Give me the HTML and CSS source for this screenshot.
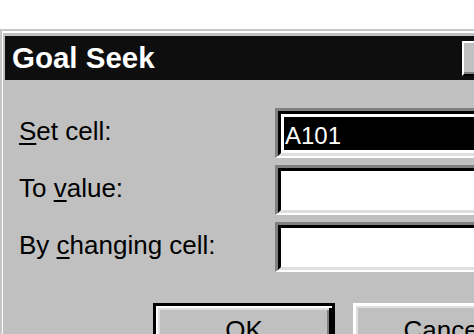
FILE: index.html
```html
<!DOCTYPE html>
<html lang="en">
<head>
<meta charset="utf-8">
<title>Goal Seek</title>
<link rel="stylesheet" href="styles.css">
</head>
<body>
<div class="spacer"></div>
<div class="window">
  <div class="frame">
    <div class="titlebar">
      <span class="title">Goal Seek</span>
      <span class="tbtn">?</span>
      <span class="tbtn">×</span>
    </div>
    <div class="content">
      <div class="form">
        <label class="label"><u>S</u>et cell:</label>
        <div class="field"><div class="field-inner"><div class="selected">A101</div></div></div>
        <label class="label">To <u>v</u>alue:</label>
        <div class="field"><div class="field-inner"><div class="plain"></div></div></div>
        <label class="label">By <u>c</u>hanging cell:</label>
        <div class="field"><div class="field-inner"><div class="plain"></div></div></div>
      </div>
      <div class="buttons">
        <div class="btn default">OK</div>
        <div class="btn">Cancel</div>
      </div>
    </div>
  </div>
</div>
</body>
</html>
```
FILE: styles.css
```css
html, body {
  margin: 0;
  padding: 0;
  background: #fff;
  overflow: hidden;
  width: 474px;
  height: 334px;
}
body {
  font-family: "Liberation Sans", Arial, sans-serif;
  color: #000;
}
.spacer {
  height: 29px;
}
.window {
  width: 600px;
  border-top: 2px solid #c6c6c6;
  border-left: 2px solid #c6c6c6;
  background: #c0c0c0;
}
.frame {
  border-top: 2px solid #fff;
  border-left: 1px solid #fff;
  padding: 3px 0 0 2px;
  height: 400px;
}
.titlebar {
  width: 542px;
  height: 44px;
  background: #0e0e0e;
  display: flex;
  align-items: flex-start;
}
.title {
  flex: 1;
  color: #fff;
  font-weight: bold;
  font-size: 29.5px;
  line-height: 44px;
  padding-left: 7px;
  white-space: nowrap;
}
.tbtn {
  width: 38px;
  height: 35px;
  margin-top: 5px;
  margin-right: 4px;
  box-sizing: border-box;
  background: #c0c0c0;
  border-top: 2px solid #fff;
  border-left: 2px solid #fff;
  border-right: 2px solid #000;
  border-bottom: 2px solid #000;
  box-shadow: inset -2px -2px #808080;
  font-size: 24px;
  font-weight: bold;
  line-height: 30px;
  text-align: center;
}
.tbtn:last-child {
  margin-right: 5px;
}
.content {
  padding: 28px 0 0 14px;
}
.form {
  display: grid;
  grid-template-columns: 256px 300px;
  grid-auto-rows: 50px;
  row-gap: 7px;
}
.label {
  font-size: 26px;
  line-height: 46px;
  white-space: nowrap;
}
.label u {
  text-decoration-thickness: 2px;
  text-underline-offset: 3px;
}
.field {
  border-top: 3px solid #808080;
  border-left: 3px solid #808080;
  border-right: 3px solid #fff;
  border-bottom: 2px solid #fff;
}
.field-inner {
  border-top: 3px solid #000;
  border-left: 3px solid #000;
  border-right: 3px solid #dfdfdf;
  border-bottom: 3px solid #dfdfdf;
  background: #fff;
  padding: 3px;
}
.selected, .plain {
  height: 33px;
}
.selected {
  background: #000;
  color: #fff;
  font-size: 24px;
  line-height: 37px;
  height: 33px;
  padding-left: 1px;
  overflow: hidden;
}
.buttons {
  display: flex;
  gap: 18px;
  margin-top: 31px;
  padding-left: 134px;
}
.btn {
  width: 182px;
  height: 70px;
  box-sizing: border-box;
  background: #c0c0c0;
  border-top: 3px solid #fff;
  border-left: 3px solid #fff;
  border-right: 3px solid #000;
  border-bottom: 3px solid #000;
  box-shadow: inset 2px 2px #dfdfdf, inset -2px -2px #808080;
  font-size: 26px;
  text-align: center;
  line-height: 36px;
  padding-top: 6px;
}
.btn.default {
  border: 3px solid #000;
  box-shadow: inset 2px 2px #fff, inset -3px -3px #000, inset 4px 4px #dfdfdf, inset -5px -5px #808080;
}
```
